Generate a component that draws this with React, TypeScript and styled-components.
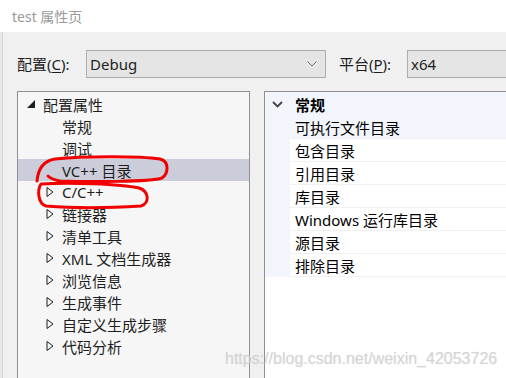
import React from 'react';
import styled, { createGlobalStyle } from 'styled-components';

const GlobalStyle = createGlobalStyle`
  html, body {
    margin: 0;
    padding: 0;
    overflow: hidden;
    background: #f0f0f0;
  }
  body {
    font-family: 'Noto Sans', 'Noto Sans CJK SC', sans-serif;
    color: #1e1e1e;
  }
`;

const Window = styled.div`
  position: relative;
  width: 506px;
  height: 378px;
  display: flex;
  flex-direction: column;
  overflow: hidden;
`;

const TitleBar = styled.div`
  height: 32px;
  flex: none;
  display: flex;
  align-items: center;
  padding-left: 12px;
  background: #ffffff;
  color: #9a9a9a;
  font-size: 14px;
`;

const Body = styled.div`
  flex: 1;
  display: flex;
  min-height: 0;
  background: #f0f0f0;
`;

const EdgeStrip = styled.div`
  width: 2px;
  flex: none;
  background: #e8e8e8;
  border-right: 1px solid #d4d4d4;
`;

const Content = styled.div`
  flex: 1;
  min-width: 0;
  display: flex;
  flex-direction: column;
  padding: 18px 0 0 14px;
`;

const Toolbar = styled.div`
  display: flex;
  align-items: center;
  height: 28px;
`;

const FieldLabel = styled.label<{ $width: number; $gap?: number }>`
  width: ${(p) => p.$width}px;
  margin-left: ${(p) => p.$gap || 0}px;
  flex: none;
  font-size: 15px;
  line-height: 20px;
  color: #1e1e1e;

  u {
    text-decoration: underline;
    text-underline-offset: 2px;
  }
`;

const Combo = styled.div<{ $width?: number }>`
  box-sizing: border-box;
  height: 28px;
  ${(p) => (p.$width ? `width: ${p.$width}px; flex: none;` : 'flex: 1;')}
  display: flex;
  align-items: center;
  justify-content: space-between;
  padding: 0 8px 0 3px;
  border: 1px solid #adadad;
  ${(p) => (p.$width ? '' : 'border-right: none;')}
  background: #e5e5e5;
  font-size: 15px;
  color: #1e1e1e;
`;

const Panels = styled.div`
  flex: 1;
  display: flex;
  gap: 14px;
  margin-top: 13px;
  min-height: 0;
`;

const TreePanel = styled.div`
  box-sizing: border-box;
  width: 233px;
  flex: none;
  padding-top: 1px;
  border: 1px solid #8c8f96;
  border-bottom: none;
  background: #f6f6f6;
`;

const TreeRow = styled.div<{ $indent: number; $selected?: boolean }>`
  height: 22px;
  display: flex;
  align-items: center;
  padding-left: ${(p) => p.$indent}px;
  background: ${(p) => (p.$selected ? '#cbcdda' : 'transparent')};
  font-size: 15px;
  color: #1e1e1e;
  white-space: nowrap;
`;

const ArrowSlot = styled.span`
  width: 16px;
  flex: none;
  display: flex;
  align-items: center;
`;

const GridPanel = styled.div`
  flex: 1;
  min-width: 0;
  border-left: 1px solid #8c8f96;
  border-top: 1px solid #8c8f96;
  background: #ffffff;
`;

const GridRow = styled.div<{ $head?: boolean; $tint?: boolean }>`
  display: flex;
  height: ${(p) => (p.$head ? 24 : 23)}px;
  background: ${(p) => (p.$head || p.$tint ? '#f2f5fb' : '#ffffff')};
`;

const Gutter = styled.div`
  width: 25px;
  flex: none;
  display: flex;
  align-items: center;
  justify-content: center;
  background: #f2f5fb;
`;

const Cell = styled.div<{ $head?: boolean }>`
  flex: 1;
  display: flex;
  align-items: center;
  padding-left: 5px;
  box-sizing: border-box;
  border-bottom: ${(p) => (p.$head ? 'none' : '1px solid #f0f0f0')};
  font-size: 15px;
  font-weight: ${(p) => (p.$head ? 700 : 400)};
  color: #000;
  white-space: nowrap;
`;

// hand-drawn red marks over the tree
const Markup = styled.svg`
  position: absolute;
  left: 0;
  top: 0;
  pointer-events: none;
`;

const Watermark = styled.div`
  position: absolute;
  left: 225px;
  top: 350px;
  font-family: 'Liberation Sans', Arial, sans-serif;
  font-size: 16px;
  color: rgba(210, 210, 210, 0.8);
  text-shadow: 0 0 1px rgba(150, 150, 150, 0.3);
  white-space: nowrap;
  pointer-events: none;
`;

const Expanded = () => (
  <svg width='9' height='8' viewBox='0 0 9 8'>
    <polygon points='8,0 8,8 0,8' fill='#1e1e1e' />
  </svg>
);

const Collapsed = () => (
  <svg width='8' height='10' viewBox='0 0 8 10'>
    <polygon points='1,0.5 7,5 1,9.5' fill='none' stroke='#1e1e1e' strokeWidth='1' />
  </svg>
);

const treeItems: { label: string; level: number; arrow?: 'open' | 'closed'; selected?: boolean }[] = [
  { label: '配置属性', level: 0, arrow: 'open' },
  { label: '常规', level: 1 },
  { label: '调试', level: 1 },
  { label: 'VC++ 目录', level: 1, selected: true },
  { label: 'C/C++', level: 1, arrow: 'closed' },
  { label: '链接器', level: 1, arrow: 'closed' },
  { label: '清单工具', level: 1, arrow: 'closed' },
  { label: 'XML 文档生成器', level: 1, arrow: 'closed' },
  { label: '浏览信息', level: 1, arrow: 'closed' },
  { label: '生成事件', level: 1, arrow: 'closed' },
  { label: '自定义生成步骤', level: 1, arrow: 'closed' },
  { label: '代码分析', level: 1, arrow: 'closed' },
];

const props = ['可执行文件目录', '包含目录', '引用目录', '库目录', 'Windows 运行库目录', '源目录', '排除目录'];

const App = () => {
  return (
    <Window>
      <GlobalStyle />
      <TitleBar>test 属性页</TitleBar>
      <Body>
        <EdgeStrip />
        <Content>
          <Toolbar>
            <FieldLabel $width={69}>
              配置(<u>C</u>):
            </FieldLabel>
            <Combo $width={240}>
              <span>Debug</span>
              <svg width='10' height='6' viewBox='0 0 10 6'>
                <polyline points='0.5,0.5 5,5 9.5,0.5' fill='none' stroke='#707070' strokeWidth='1' />
              </svg>
            </Combo>
            <FieldLabel $width={68} $gap={13}>
              平台(<u>P</u>):
            </FieldLabel>
            <Combo>
              <span>x64</span>
            </Combo>
          </Toolbar>
          <Panels>
            <TreePanel>
              {treeItems.map((item) => (
                <TreeRow key={item.label} $indent={item.level === 0 ? 9 : 28} $selected={item.selected}>
                  <ArrowSlot>
                    {item.arrow === 'open' && <Expanded />}
                    {item.arrow === 'closed' && <Collapsed />}
                  </ArrowSlot>
                  {item.label}
                </TreeRow>
              ))}
            </TreePanel>
            <GridPanel>
              <GridRow $head>
                <Gutter>
                  <svg width='11' height='7' viewBox='0 0 11 7'>
                    <polyline points='1,1 5.5,5.5 10,1' fill='none' stroke='#404040' strokeWidth='1.8' />
                  </svg>
                </Gutter>
                <Cell $head>常规</Cell>
              </GridRow>
              {props.map((p, i) => (
                <GridRow key={p} $tint={i === 0}>
                  <Gutter />
                  <Cell>{p}</Cell>
                </GridRow>
              ))}
            </GridPanel>
          </Panels>
        </Content>
      </Body>
      <Markup width='506' height='378' viewBox='0 0 506 378'>
        <path
          d='M37,181 C38,170 42,161 55,159 C85,156 140,156 160,159 C169,161 169,173 162,178 C150,182 90,182 60,181 C54,180 50,178 48,176'
          fill='none'
          stroke='#f00000'
          strokeWidth='3'
          strokeLinecap='round'
        />
        <path
          d='M41,184 C70,182 120,184 139,188 C149,191 150,203 141,206 C110,208 70,208 46,206 C38,204 37,190 41,184'
          fill='none'
          stroke='#f00000'
          strokeWidth='3'
          strokeLinecap='round'
        />
      </Markup>
      <Watermark>https://blog.csdn.net/weixin_42053726</Watermark>
    </Window>
  );
};

export default App;
